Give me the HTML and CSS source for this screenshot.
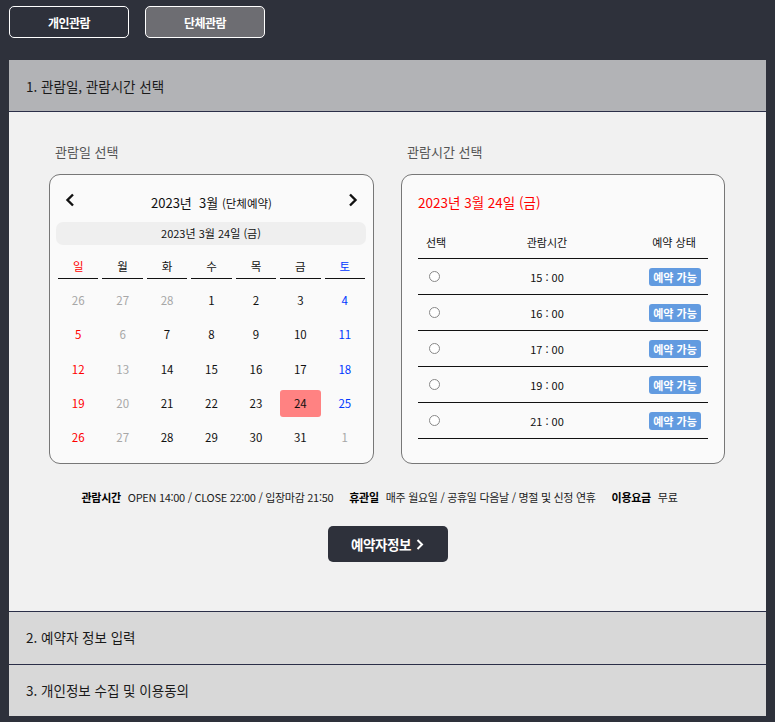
FILE: index.html
```html
<!DOCTYPE html>
<html lang="ko">
<head>
<meta charset="utf-8">
<title>관람 예약</title>
<link rel="stylesheet" href="styles.css">
</head>
<body>
<div class="tabs">
  <button class="tab">개인관람</button>
  <button class="tab active">단체관람</button>
</div>
<div class="panel">
  <div class="sec-head open">1. 관람일, 관람시간 선택</div>
  <div class="sec-body">
    <div class="cols">
      <div class="col">
        <div class="label">관람일 선택</div>
        <div class="box cal">
          <div class="cal-top">
            <svg class="arrow" width="10" height="14" viewBox="0 0 10 14"><path d="M8 1.5 2.5 7 8 12.5" fill="none" stroke="#111" stroke-width="2.4"/></svg>
            <div class="cal-title">2023년&nbsp; 3월 <span class="small">(단체예약)</span></div>
            <svg class="arrow" width="10" height="14" viewBox="0 0 10 14"><path d="M2 1.5 7.5 7 2 12.5" fill="none" stroke="#111" stroke-width="2.4"/></svg>
          </div>
          <div class="cal-sel">2023년 3월 24일 (금)</div>
          <div class="grid head">
            <div class="sun">일</div><div>월</div><div>화</div><div>수</div><div>목</div><div>금</div><div class="sat">토</div>
          </div>
          <div class="grid days">
            <div class="other">26</div><div class="other">27</div><div class="other">28</div><div>1</div><div>2</div><div>3</div><div class="sat">4</div>
            <div class="sun">5</div><div class="other">6</div><div>7</div><div>8</div><div>9</div><div>10</div><div class="sat">11</div>
            <div class="sun">12</div><div class="other">13</div><div>14</div><div>15</div><div>16</div><div>17</div><div class="sat">18</div>
            <div class="sun">19</div><div class="other">20</div><div>21</div><div>22</div><div>23</div><div class="picked">24</div><div class="sat">25</div>
            <div class="sun">26</div><div class="other">27</div><div>28</div><div>29</div><div>30</div><div>31</div><div class="other">1</div>
          </div>
        </div>
      </div>
      <div class="col">
        <div class="label">관람시간 선택</div>
        <div class="box times">
          <div class="t-title">2023년 3월 24일 (금)</div>
          <div class="t-row t-head"><span>선택</span><span>관람시간</span><span>예약 상태</span></div>
          <div class="t-row"><span><i class="radio"></i></span><span>15 : 00</span><span><b class="badge">예약 가능</b></span></div>
          <div class="t-row"><span><i class="radio"></i></span><span>16 : 00</span><span><b class="badge">예약 가능</b></span></div>
          <div class="t-row"><span><i class="radio"></i></span><span>17 : 00</span><span><b class="badge">예약 가능</b></span></div>
          <div class="t-row"><span><i class="radio"></i></span><span>19 : 00</span><span><b class="badge">예약 가능</b></span></div>
          <div class="t-row"><span><i class="radio"></i></span><span>21 : 00</span><span><b class="badge">예약 가능</b></span></div>
        </div>
      </div>
    </div>
    <div class="info">
      <span><b>관람시간</b>OPEN 14:00 / CLOSE 22:00 / 입장마감 21:50</span>
      <span><b>휴관일</b>매주 월요일 / 공휴일 다음날 / 명절 및 신정 연휴</span>
      <span><b>이용요금</b>무료</span>
    </div>
    <div class="next-wrap"><button class="next">예약자정보 <svg width="8" height="11" viewBox="0 0 8 11"><path d="M1.5 1 6 5.5 1.5 10" fill="none" stroke="#fff" stroke-width="2"/></svg></button></div>
  </div>
  <div class="sec-head">2. 예약자 정보 입력</div>
  <div class="sec-head last">3. 개인정보 수집 및 이용동의</div>
</div>
</body>
</html>
```
FILE: styles.css
```css
* { box-sizing: border-box; }
body {
  margin: 0;
  background: #2e313b;
  font-family: "Noto Sans CJK KR", "Noto Sans", sans-serif;
  color: #111;
}
.tabs {
  display: flex;
  gap: 16px;
  padding: 6px 9px 0;
}
.tab {
  width: 120px;
  height: 32px;
  border: 1px solid #fff;
  border-radius: 5px;
  background: #2e313b;
  color: #fff;
  font-family: inherit;
  font-size: 12px;
  font-weight: 700;
  letter-spacing: -0.5px;
  padding: 0;
}
.tab.active { background: #6d6d72; }
.panel {
  margin: 22px 9px 0;
  width: 757px;
}
.sec-head {
  height: 53px;
  line-height: 51px;
  padding-left: 17px;
  font-size: 13.5px;
  background: #d8d8d8;
  border-top: 1px solid #2b2f48;
  color: #1a1a1a;
}
.sec-head.last { height: 52px; }
.sec-head.open {
  background: #b2b3b6;
  border-top: 0;
  height: 52px;
  line-height: 52px;
  border-bottom: 1px solid #2b2f48;
}
.sec-body {
  background: #f1f1f1;
  height: 499px;
  padding: 30px 40px 0;
}
.cols {
  display: flex;
  gap: 27px;
}
.col { width: 325px; }
.col + .col { width: 324px; }
.label {
  height: 20px;
  line-height: 20px;
  font-size: 13px;
  color: #555;
  padding-left: 6px;
  margin-bottom: 12px;
}
.box {
  height: 290px;
  border: 1px solid #777;
  border-radius: 11px;
  background: #fafafa;
}
.cal { padding: 0 7px 0 6px; }
.cal-top {
  display: flex;
  align-items: center;
  justify-content: space-between;
  height: 47px;
  padding: 3px 8px 0 9px;
}
.cal-title {
  font-size: 13px;
  padding-top: 4px;
  color: #111;
}
.cal-title .small { font-size: 11.5px; }
.cal-sel {
  height: 23px;
  line-height: 23px;
  text-align: center;
  background: #efefef;
  border-radius: 7px;
  font-size: 11px;
}
.grid {
  display: grid;
  grid-template-columns: repeat(7, 1fr);
  column-gap: 4px;
  padding: 0 1px 0 2px;
  text-align: center;
  font-size: 11.5px;
}
.grid.head { margin-top: 10px; }
.grid.head div {
  height: 24px;
  line-height: 23px;
  border-bottom: 1.5px solid #111;
}
.grid.days {
  margin-top: 8px;
  row-gap: 7.3px;
}
.grid.days div {
  height: 27px;
  line-height: 27px;
}
.sun { color: #f00; }
.sat { color: #0038ff; }
.grid .other { color: #a7a7a7; }
.grid .picked { background: #ff8282; border-radius: 3px; }
.times { padding: 0 16px 0 16px; }
.t-title {
  color: #f00;
  font-size: 13.5px;
  height: 53px;
  line-height: 54px;
}
.t-row {
  display: grid;
  grid-template-columns: 36px 1fr 68px;
  align-items: center;
  text-align: center;
  height: 36px;
  border-bottom: 1.5px solid #111;
  font-size: 11px;
}
.t-head { height: 31px; padding-bottom: 2px; }
.t-row span { display: flex; justify-content: center; align-items: center; }
.radio {
  width: 11px;
  height: 11px;
  border: 1px solid #888;
  border-radius: 50%;
  background: #fff;
  display: block;
  margin-right: 3px;
}
.badge {
  display: block;
  width: 52px;
  height: 18px;
  line-height: 18px;
  background: #629be0;
  color: #fff;
  border-radius: 3px;
  font-size: 11px;
  font-weight: 700;
  margin-left: 2px;
}
.info {
  display: flex;
  justify-content: center;
  gap: 16px;
  margin-top: 22px;
  margin-right: 16px;
  font-size: 11px;
  letter-spacing: -0.3px;
  color: #222;
  height: 22px;
  line-height: 22px;
}
.info b { color: #000; margin-right: 7px; font-size: 11px; }
.next-wrap {
  display: flex;
  justify-content: center;
  margin-top: 18px;
}
.next {
  width: 120px;
  height: 36px;
  background: #2e313b;
  color: #fff;
  border: 0;
  border-radius: 5px;
  font-family: inherit;
  font-size: 13.5px;
  font-weight: 700;
  display: flex;
  align-items: center;
  justify-content: center;
  gap: 5px;
  letter-spacing: -0.4px;
}
```
